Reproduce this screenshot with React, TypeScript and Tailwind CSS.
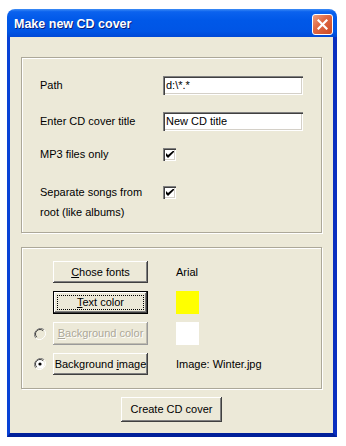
import React from 'react';

const raised =
  'shadow-[inset_-1px_-1px_0_#404040,inset_1px_1px_0_#ffffff,inset_-2px_-2px_0_#808080]';
const sunken =
  'shadow-[inset_1px_1px_0_#808080,inset_2px_2px_0_#404040,inset_-1px_-1px_0_#ffffff,inset_-2px_-2px_0_#d4d0c8]';

const Check: React.FC = () => (
  <div className={`w-[13px] h-[13px] bg-white ${sunken} flex items-center justify-center`}>
    <svg width="8" height="7" viewBox="0 0 8 7">
      <path d="M0 2 L0 5 L2 7 L8 1 L8 -1 L2 4 Z" fill="#000" />
    </svg>
  </div>
);

const Radio: React.FC<{ checked?: boolean; disabled?: boolean }> = ({ checked, disabled }) => (
  <svg width="12" height="12" viewBox="0 0 12 12">
    <path d="M10.2 1.8 A6 6 0 0 0 1.8 10.2" stroke="#808080" strokeWidth="1" fill="none" />
    <path d="M1.8 10.2 A6 6 0 0 0 10.2 1.8" stroke="#ffffff" strokeWidth="1" fill="none" />
    <circle cx="6" cy="6" r="4.5" fill={disabled ? '#ece9d8' : '#ffffff'} />
    <path d="M9.2 2.8 A4.5 4.5 0 0 0 2.8 9.2" stroke="#404040" strokeWidth="1" fill="none" />
    {checked && <circle cx="6" cy="6" r="1.6" fill="#000" />}
  </svg>
);

const Btn: React.FC<{
  children: React.ReactNode;
  w: string;
  h?: string;
  focus?: boolean;
  disabled?: boolean;
}> = ({ children, w, h = 'h-[23px]', focus, disabled }) => {
  if (focus) {
    return (
      <div className={`${w} ${h} border border-black bg-[#ece9d8] p-0`}>
        <div className={`w-full h-full ${raised} p-[3px]`}>
          <div className="w-full h-full border border-dotted border-black flex items-center justify-center">
            {children}
          </div>
        </div>
      </div>
    );
  }
  return (
    <div
      className={`${w} ${h} bg-[#ece9d8] flex items-center justify-center ${
        disabled
          ? 'shadow-[inset_-1px_-1px_0_#9a9a9a,inset_1px_1px_0_#ffffff,inset_-2px_-2px_0_#c0bdb0] text-[#aca899] [text-shadow:1px_1px_0_#ffffff]'
          : raised
      }`}
    >
      {children}
    </div>
  );
};

export default function App() {
  return (
    <div
      className="w-[346px] h-[446px] bg-white pl-[7px] pt-[9px] text-[11px] text-black"
      style={{ fontFamily: '"Liberation Sans", Arial, sans-serif' }}
    >
      <div className="w-[330px] h-[428px] flex flex-col">
        {/* title bar */}
        <div className="h-[28px] rounded-t-[8px] bg-[linear-gradient(to_bottom,#3d8cf5_0%,#0b62ee_10%,#0058e8_40%,#0055e5_80%,#0049d6_100%)] flex items-start justify-between pl-[7px] pr-[4px]">
          <div className="mt-[8px] text-white font-bold text-[12.5px] leading-[14px] [text-shadow:1px_1px_0_#0a1e78]">
            Make new CD cover
          </div>
          <div className="mt-[5px] w-[21px] h-[21px] rounded-[3px] border border-white bg-[linear-gradient(135deg,#f0a080_0%,#e06a45_40%,#cc4a25_100%)] flex items-center justify-center">
            <svg width="11" height="11" viewBox="0 0 11 11">
              <path d="M1.5 1.5 L9.5 9.5 M9.5 1.5 L1.5 9.5" stroke="#fff" strokeWidth="2.2" strokeLinecap="square" />
            </svg>
          </div>
        </div>

        {/* body */}
        <div className="flex-1 bg-[#ece9d8] border-l-[3px] border-r-[4px] border-b-[4px] border-l-[#0842d6] border-r-[#0a2fc0] border-b-[#00209a] px-[11px] pt-[20px] flex flex-col">
          {/* group 1 */}
          <div className="h-[176px] border border-[#aca899] shadow-[1px_1px_0_#ffffff,inset_1px_1px_0_#ffffff] pl-[18px] pt-[18px] flex flex-col">
            <div className="flex items-center h-[19px]">
              <div className="w-[123px]">Path</div>
              <div className={`w-[140px] h-[19px] bg-white ${sunken} px-[3px] flex items-center`}>d:\*.*</div>
            </div>
            <div className="flex items-center h-[19px] mt-[17px]">
              <div className="w-[123px]">Enter CD cover title</div>
              <div className={`w-[140px] h-[19px] bg-white ${sunken} px-[3px] flex items-center`}>New CD title</div>
            </div>
            <div className="flex items-center h-[19px] mt-[14px]">
              <div className="w-[123px]">MP3 files only</div>
              <Check />
            </div>
            <div className="flex items-start mt-[18px]">
              <div className="w-[123px] leading-[20px]">
                Separate songs from
                <br />
                root (like albums)
              </div>
              <div className="mt-[4px]">
                <Check />
              </div>
            </div>
          </div>

          {/* group 2 */}
          <div className="h-[142px] mt-[14px] border border-[#aca899] shadow-[1px_1px_0_#ffffff,inset_1px_1px_0_#ffffff] pl-[11px] pt-[13px] flex flex-col gap-[8px]">
            <div className="flex items-center">
              <div className="w-[20px]" />
              <Btn w="w-[95px]" h="h-[22px]">
                <span><u>C</u>hose fonts</span>
              </Btn>
              <div className="ml-[28px]">Arial</div>
            </div>
            <div className="flex items-center">
              <div className="w-[20px]" />
              <Btn w="w-[95px]" focus>
                <span><u>T</u>ext color</span>
              </Btn>
              <div className="ml-[28px] w-[23px] h-[23px] bg-[#ffff00]" />
            </div>
            <div className="flex items-center">
              <div className="w-[20px] pl-[1px] flex items-center">
                <Radio disabled />
              </div>
              <Btn w="w-[95px]" disabled>
                <span><u>B</u>ackground color</span>
              </Btn>
              <div className="ml-[28px] w-[23px] h-[23px] bg-white" />
            </div>
            <div className="flex items-center">
              <div className="w-[20px] pl-[1px] flex items-center">
                <Radio checked />
              </div>
              <Btn w="w-[95px]" h="h-[22px]">
                <span>Background <u>i</u>mage</span>
              </Btn>
              <div className="ml-[28px]">Image: Winter.jpg</div>
            </div>
          </div>

          <div className="flex justify-center mt-[8px]">
            <Btn w="w-[101px]" h="h-[25px]">
              <span>Create CD cover</span>
            </Btn>
          </div>
        </div>
      </div>
    </div>
  );
}
